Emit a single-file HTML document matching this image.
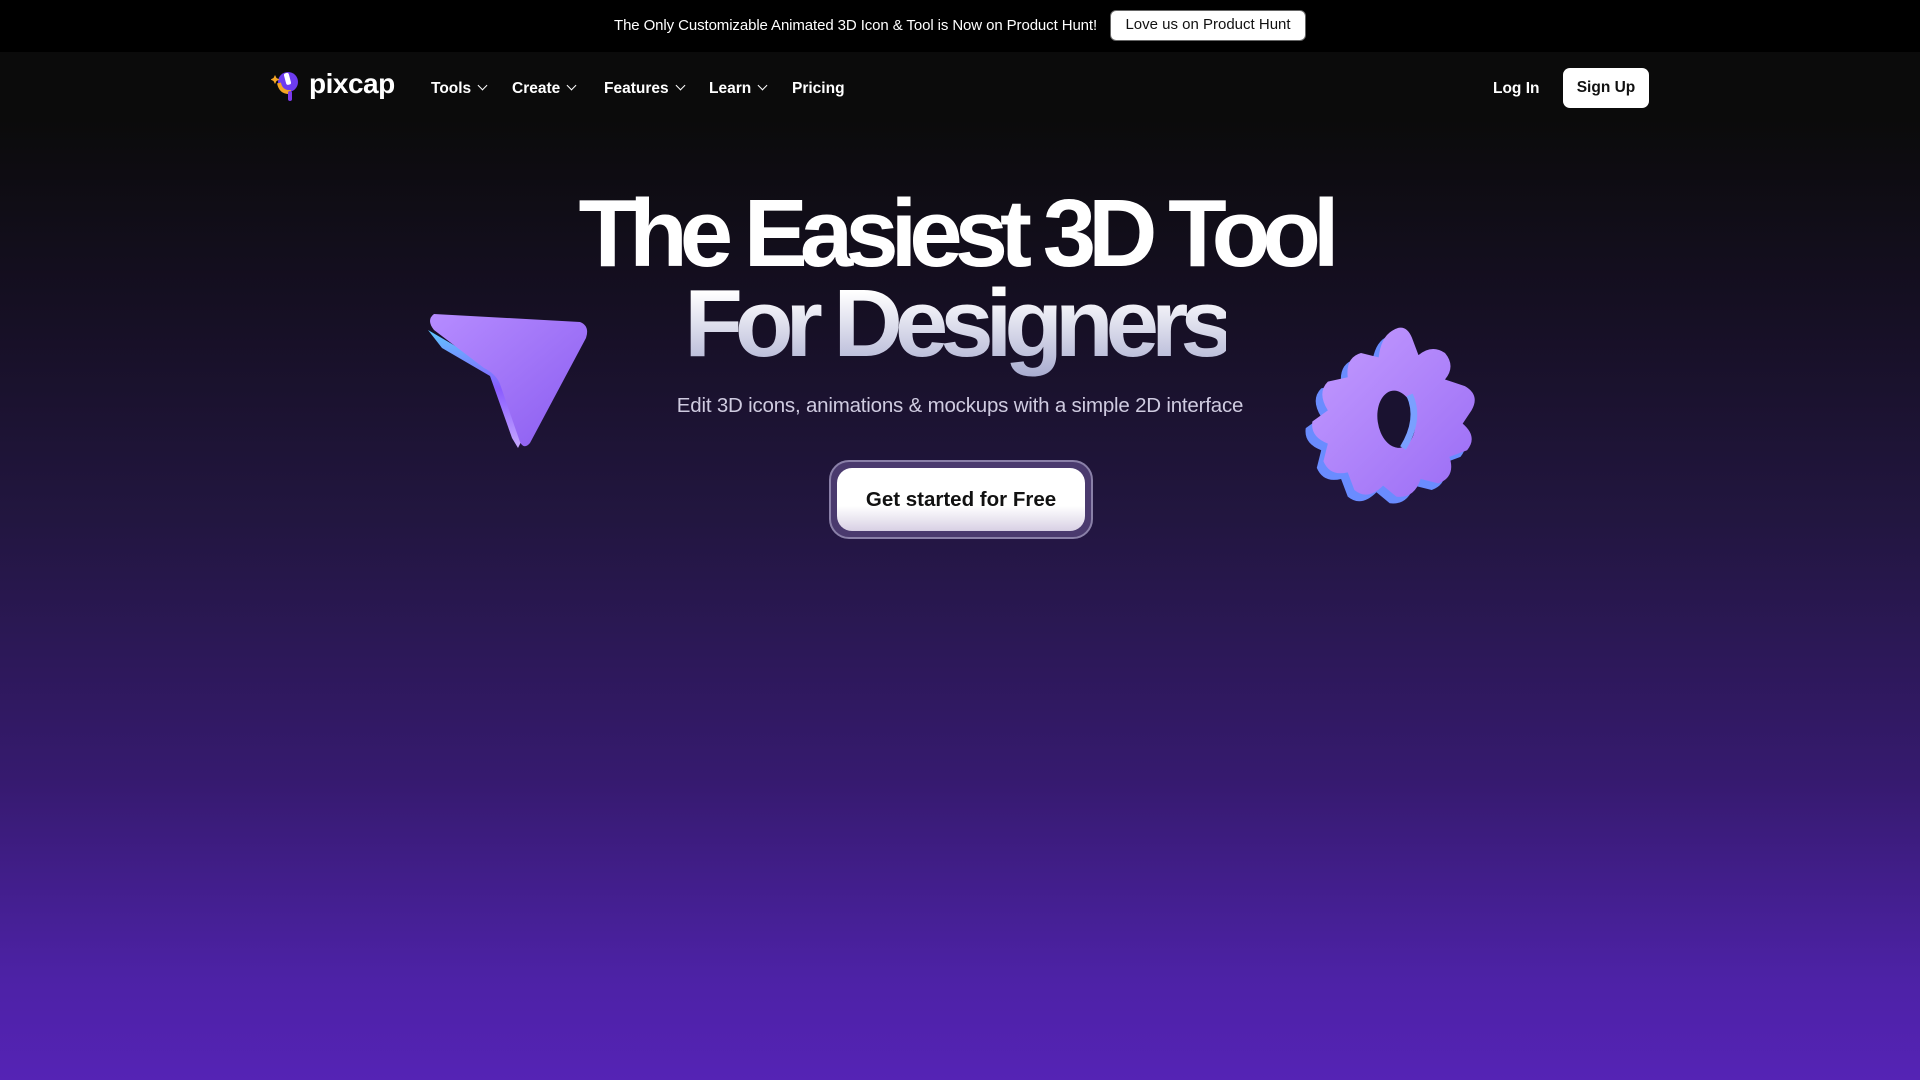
<!DOCTYPE html>
<html><head><meta charset="utf-8"><style>
*{margin:0;padding:0;box-sizing:border-box}
body{width:1920px;height:1080px;overflow:hidden;font-family:"Liberation Sans",sans-serif;color:#fff;
background:linear-gradient(180deg,#0b0b0b 0px,#0b0b0b 120px,#150f22 300px,#221640 520px,#361a6f 780px,#4d22a6 980px,#5523b5 1080px);position:relative}
.banner{position:absolute;top:0;left:0;width:1920px;height:52px;background:#000;font-size:15px}
.banner .t{position:absolute;left:614px;top:17px;letter-spacing:-0.1px}
.banner .b{position:absolute;left:1110px;top:10px;width:196px;height:31px;background:#fff;color:#111;border:1.5px solid #666;border-radius:6px;font-size:15px;text-align:center;line-height:28px}
.nav{position:absolute;top:52px;left:0;width:1920px;height:70px}
.nav .i{position:absolute;top:28px;font-size:15.5px;font-weight:bold}
.chev{display:inline-block;width:7px;height:7px;border-right:1.5px solid #fff;border-bottom:1.5px solid #fff;transform:rotate(45deg);margin-left:8px;position:relative;top:-4px}
.signup{position:absolute;left:1563px;top:68px;width:86px;height:40px;background:#fff;color:#111;border-radius:7px;font-weight:bold;font-size:15.5px;text-align:center;line-height:40px}
h1{position:absolute;left:-5px;width:1920px;text-align:center;font-size:96px;font-weight:bold;letter-spacing:-8px;line-height:90px;top:189px}
h1 .l2{background:linear-gradient(180deg,#fff 20%,#a9acd0 100%);-webkit-background-clip:text;color:transparent}
.sub{position:absolute;top:394px;width:1920px;text-align:center;font-size:20.5px;color:#cfcbe0;letter-spacing:-0.2px}
.cta{position:absolute;left:829px;top:460px;width:264px;height:79px;border-radius:20px;background:#4a3a6e;border:2px solid #8a80a8}
.cta .in{position:absolute;left:6px;top:6px;width:248px;height:63px;border-radius:15px;background:linear-gradient(180deg,#fff 0%,#fff 60%,#d8d0e4 100%);color:#111;font-weight:bold;font-size:20.5px;text-align:center;line-height:63px}
</style></head><body>
<div class="banner"><span class="t">The Only Customizable Animated 3D Icon &amp; Tool is Now on Product Hunt!</span><div class="b">Love us on Product Hunt</div></div>
<div class="nav">
<svg style="position:absolute;left:271px;top:17px" width="30" height="34" viewBox="0 0 30 34"><circle cx="17" cy="13" r="10" fill="#6d3cf0"/><path d="M8 14 q2 10 12 9" stroke="#f5a524" stroke-width="4" fill="none"/><rect x="14" y="4" width="5" height="12" rx="2" fill="#fff" transform="rotate(-15 16 10)"/><rect x="17" y="22" width="4" height="10" rx="2" fill="#7c3aed"/><path d="M4 6 l1.5 3 3 1.5 -3 1.5 -1.5 3 -1.5 -3 -3 -1.5 3 -1.5z" fill="#f5a524"/></svg>
<span style="position:absolute;left:309px;top:16px;font-size:28px;font-weight:bold;letter-spacing:-0.5px">pixcap</span>
<span class="i" style="left:431px">Tools<span class="chev"></span></span>
<span class="i" style="left:512px">Create<span class="chev"></span></span>
<span class="i" style="left:604px">Features<span class="chev"></span></span>
<span class="i" style="left:709px">Learn<span class="chev"></span></span>
<span class="i" style="left:792px">Pricing</span>
<span class="i" style="left:1493px">Log In</span>
</div>
<div class="signup">Sign Up</div>
<svg style="position:absolute;left:420px;top:308px" width="175" height="145" viewBox="0 0 175 145">
<defs><linearGradient id="g1" x1="0" y1="0" x2="1" y2="1"><stop offset="0" stop-color="#b68cff"/><stop offset="1" stop-color="#8a5cf0"/></linearGradient>
<linearGradient id="g2" x1="0" y1="0" x2="0" y2="1"><stop offset="0" stop-color="#5ec8ff"/><stop offset=".5" stop-color="#8a5cff"/><stop offset="1" stop-color="#c5a8ff"/></linearGradient></defs>
<path d="M8 22 L22 40 L70 68 L92 130 L98 140 L102 132 L90 70 Z" fill="url(#g2)"/>
<path d="M14 6 L160 14 Q170 18 166 30 L110 135 Q104 142 100 134 L80 76 Q76 66 64 60 L14 22 Q6 12 14 6Z" fill="url(#g1)"/>
</svg>
<svg style="position:absolute;left:1290px;top:322px" width="205" height="210" viewBox="0 0 185 190">
<defs><linearGradient id="g3" x1="0" y1="0" x2="1" y2="1"><stop offset="0" stop-color="#c49cff"/><stop offset="1" stop-color="#9a6cf5"/></linearGradient></defs>
<g transform="translate(-6,6)"><path d="M92 8 Q104 0 110 14 L116 30 Q128 20 140 28 Q150 40 140 52 L158 58 Q172 66 164 80 L156 92 Q170 104 160 116 L144 122 Q150 140 134 146 L118 142 Q112 160 96 158 L84 148 Q70 162 58 152 L52 136 Q36 140 30 126 L34 110 Q18 104 20 90 L34 80 Q24 64 34 54 L52 50 Q50 32 64 28 L80 32 Q82 14 92 8Z" fill="#6a8cff"/></g>
<path d="M92 8 Q104 0 110 14 L116 30 Q128 20 140 28 Q150 40 140 52 L158 58 Q172 66 164 80 L156 92 Q170 104 160 116 L144 122 Q150 140 134 146 L118 142 Q112 160 96 158 L84 148 Q70 162 58 152 L52 136 Q36 140 30 126 L34 110 Q18 104 20 90 L34 80 Q24 64 34 54 L52 50 Q50 32 64 28 L80 32 Q82 14 92 8Z" fill="url(#g3)"/>
<ellipse cx="96" cy="88" rx="17" ry="26" fill="#1a1230" transform="rotate(-8 96 88)"/>
<path d="M108 66 Q118 88 102 114" stroke="#7aa0ff" stroke-width="6" fill="none"/>
</svg>
<h1>The Easiest 3D Tool<br><span class="l2">For Designers</span></h1>
<div class="sub">Edit 3D icons, animations &amp; mockups with a simple 2D interface</div>
<div class="cta"><div class="in">Get started for Free</div></div>
</body></html>
